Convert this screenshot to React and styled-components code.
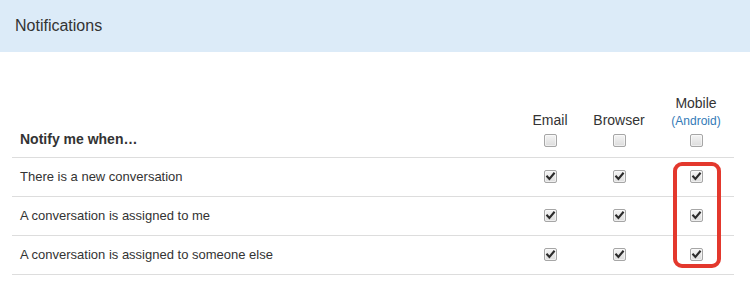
import React from "react";
import styled, { createGlobalStyle } from "styled-components";

const Global = createGlobalStyle`
  html, body { margin: 0; padding: 0; background: #fff; }
  body { font-family: "Liberation Sans", Arial, sans-serif; color: #333; }
`;

const Page = styled.div`
  width: 750px;
`;

const Header = styled.div`
  height: 52px;
  line-height: 51px;
  padding-left: 15px;
  background: #dcebf8;
  font-size: 16px;
  color: #333;
`;

const TableWrap = styled.div`
  position: relative;
  margin: 33px 16px 0 12px;
`;

const Table = styled.table`
  width: 100%;
  border-collapse: collapse;
  table-layout: fixed;
`;

const Th = styled.th`
  vertical-align: bottom;
  padding: 8px 8px 8px 8px;
  text-align: ${(p) => (p.$left ? "left" : "center")};
  font-weight: ${(p) => (p.$left ? "bold" : "normal")};
  font-size: 14px;
  line-height: 20px;
  border-bottom: 1px solid #ddd;
  color: #333;
`;

const Td = styled.td`
  padding: 10px 8px;
  font-size: 13px;
  line-height: 18px;
  border-bottom: 1px solid #ddd;
  text-align: ${(p) => (p.$left ? "left" : "center")};
  vertical-align: middle;
  color: #333;
`;

const Sub = styled.div`
  font-size: 12px;
  line-height: 17px;
  color: #337ab7;
`;

const BoxWrap = styled.div`
  display: flex;
  justify-content: center;
  margin-top: ${(p) => (p.$head ? "4px" : "0")};
  margin-bottom: ${(p) => (p.$head ? "2px" : "1px")};
`;

const Box = styled.span`
  display: inline-flex;
  align-items: center;
  justify-content: center;
  width: 11px;
  height: 11px;
  border: 1px solid #a6a6a6;
  border-radius: 2px;
  background: linear-gradient(#f4f4f4, #dcdcdc);
  box-shadow: inset 0 0 0 1px rgba(255, 255, 255, 0.5);
`;

const Highlight = styled.div`
  position: absolute;
  left: 661px;
  top: 77px;
  width: 40px;
  height: 98px;
  border: 4px solid #e3382d;
  border-radius: 9px;
  pointer-events: none;
`;

function Check({ checked, head }) {
  return (
    <BoxWrap $head={head}>
      <Box>
        {checked && (
          <svg width="11" height="11" viewBox="0 0 11 11">
            <path
              d="M2.2 5.6 L4.4 7.9 L8.9 2.6"
              fill="none"
              stroke="#2b2b2b"
              strokeWidth="2.1"
              strokeLinecap="square"
            />
          </svg>
        )}
      </Box>
    </BoxWrap>
  );
}

const rows = [
  "There is a new conversation",
  "A conversation is assigned to me",
  "A conversation is assigned to someone else",
];

export default function App() {
  return (
    <Page>
      <Global />
      <Header>Notifications</Header>
      <TableWrap>
        <Table>
          <colgroup>
            <col />
            <col style={{ width: 60 }} />
            <col style={{ width: 78 }} />
            <col style={{ width: 76 }} />
          </colgroup>
          <thead>
            <tr>
              <Th $left>Notify me when…</Th>
              <Th>
                Email
                <Check head />
              </Th>
              <Th>
                Browser
                <Check head />
              </Th>
              <Th>
                Mobile
                <Sub>(Android)</Sub>
                <Check head />
              </Th>
            </tr>
          </thead>
          <tbody>
            {rows.map((r) => (
              <tr key={r}>
                <Td $left>{r}</Td>
                <Td>
                  <Check checked />
                </Td>
                <Td>
                  <Check checked />
                </Td>
                <Td>
                  <Check checked />
                </Td>
              </tr>
            ))}
          </tbody>
        </Table>
        <Highlight />
      </TableWrap>
    </Page>
  );
}
